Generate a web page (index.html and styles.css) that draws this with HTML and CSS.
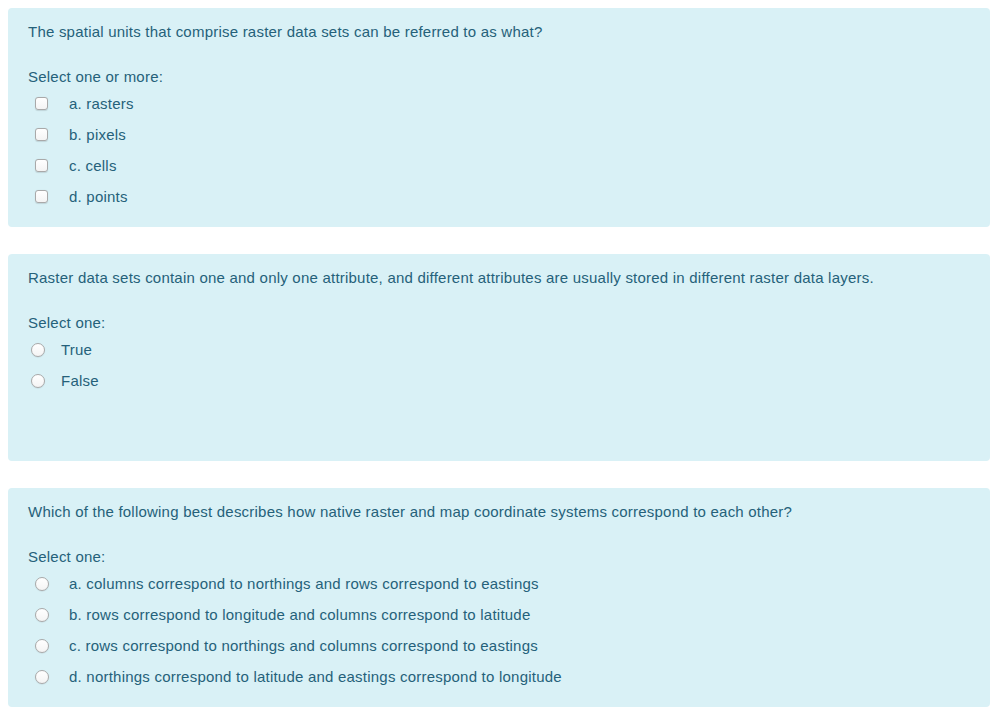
FILE: index.html
```html
<!DOCTYPE html>
<html lang="en">
<head>
<meta charset="utf-8">
<title>Quiz</title>
<link rel="stylesheet" href="styles.css">
</head>
<body>
<div class="quiz">
  <div class="que">
    <div class="qtext">The spatial units that comprise raster data sets can be referred to as what?</div>
    <div class="prompt">Select one or more:</div>
    <div class="answers">
      <label class="opt"><input type="checkbox" class="chk"><span class="lbl">a. rasters</span></label>
      <label class="opt"><input type="checkbox" class="chk"><span class="lbl">b. pixels</span></label>
      <label class="opt"><input type="checkbox" class="chk"><span class="lbl">c. cells</span></label>
      <label class="opt"><input type="checkbox" class="chk"><span class="lbl">d. points</span></label>
    </div>
  </div>
  <div class="que que-tall">
    <div class="qtext">Raster data sets contain one and only one attribute, and different attributes are usually stored in different raster data layers.</div>
    <div class="prompt">Select one:</div>
    <div class="answers answers-tf">
      <label class="opt"><input type="radio" name="q2" class="rad"><span class="lbl">True</span></label>
      <label class="opt"><input type="radio" name="q2" class="rad"><span class="lbl">False</span></label>
    </div>
  </div>
  <div class="que">
    <div class="qtext">Which of the following best describes how native raster and map coordinate systems correspond to each other?</div>
    <div class="prompt">Select one:</div>
    <div class="answers">
      <label class="opt"><input type="radio" name="q3" class="rad"><span class="lbl">a. columns correspond to northings and rows correspond to eastings</span></label>
      <label class="opt"><input type="radio" name="q3" class="rad"><span class="lbl">b. rows correspond to longitude and columns correspond to latitude</span></label>
      <label class="opt"><input type="radio" name="q3" class="rad"><span class="lbl">c. rows correspond to northings and columns correspond to eastings</span></label>
      <label class="opt"><input type="radio" name="q3" class="rad"><span class="lbl">d. northings correspond to latitude and eastings correspond to longitude</span></label>
    </div>
  </div>
</div>
</body>
</html>
```
FILE: styles.css
```css
* { box-sizing: border-box; }
html, body { margin: 0; padding: 0; background: #ffffff; }
body {
  font-family: "Liberation Sans", Arial, sans-serif;
  font-size: 15px;
  letter-spacing: 0.22px;
  color: #25617a;
}
.quiz {
  padding: 8px;
  display: flex;
  flex-direction: column;
  gap: 27px;
}
.que {
  background: #d9f1f6;
  border-radius: 4px;
  padding: 14px 20px 15px 20px;
}
.que-tall { min-height: 207px; }
.qtext { line-height: 20px; }
.prompt { line-height: 20px; margin-top: 25px; }
.answers { padding-top: 1px; display: flex; flex-direction: column; }
.opt {
  display: flex;
  align-items: center;
  height: 31px;
}
.chk, .rad {
  appearance: none;
  -webkit-appearance: none;
  margin: 0;
  width: 13px;
  height: 13px;
  flex: none;
  background: linear-gradient(#ffffff, #f4f4f4);
  border: 1px solid #a9a9a9;
  box-shadow: 0 0.5px 1px rgba(0,0,0,0.12);
}
.chk { border-radius: 3px; margin-left: 7px; margin-right: 21px; }
.rad { border-radius: 50%; width: 14px; height: 14px; margin-left: 7px; margin-right: 20px; }
.answers-tf .rad { margin-left: 3px; margin-right: 16px; }
.lbl { line-height: 20px; }
```
